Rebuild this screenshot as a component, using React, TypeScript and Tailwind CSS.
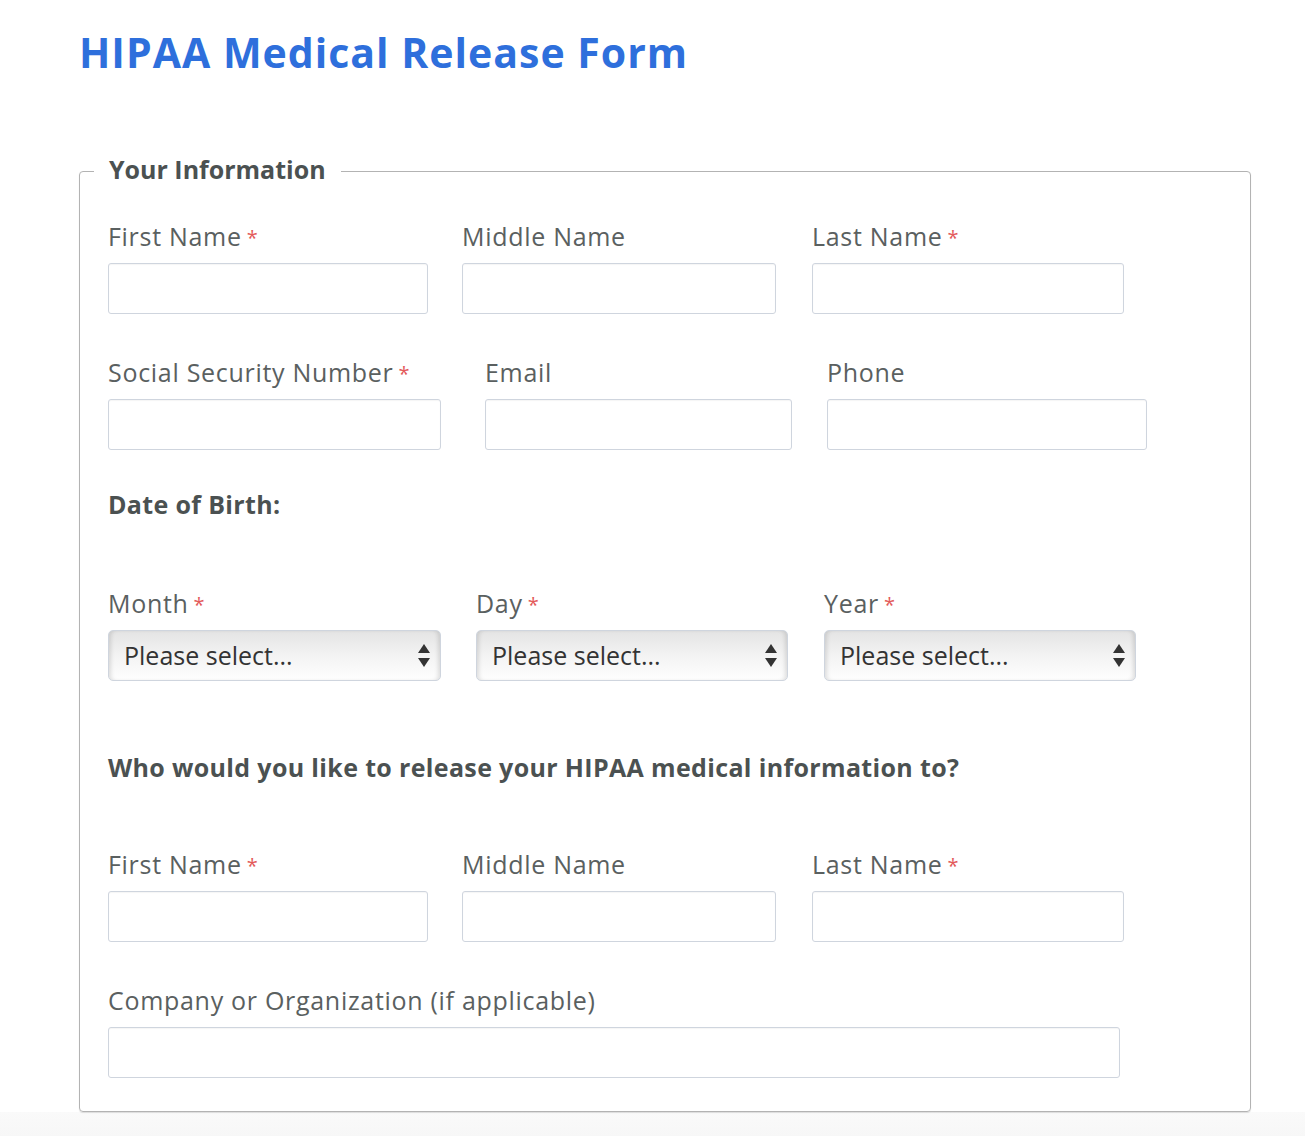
import React from "react";

const font = { fontFamily: '"Open Sans", "Liberation Sans", sans-serif' };

type Field = { label: string; required?: boolean; width: string };

function Label({ text, required }: { text: string; required?: boolean }) {
  return (
    <label className="block text-[25px] leading-[30px] tracking-[0.7px] text-[#5a6060] mb-[12px] whitespace-nowrap">
      {text}
      {required && <span className="text-[#e35a5a] text-[20px] align-top ml-[5px] relative top-[2px]">*</span>}
    </label>
  );
}

function TextField({ label, required, width }: Field) {
  return (
    <div className={width}>
      <Label text={label} required={required} />
      <input
        type="text"
        className="block w-full h-[51px] bg-white border border-[#cfd5de] rounded-[3px] shadow-[inset_0_1px_1px_rgba(0,0,0,0.04)] outline-none"
      />
    </div>
  );
}

function SelectField({ label, required, width }: Field) {
  return (
    <div className={width}>
      <Label text={label} required={required} />
      <div className="relative h-[51px]">
        <select
          className="appearance-none w-full h-full pl-[15px] pr-[40px] text-[25px] text-[#333] border border-[#cfd5de] rounded-[5px] bg-gradient-to-b from-[#e4e4e4] via-[#f3f3f3] to-[#fefefe] shadow-[inset_4px_0_4px_-2px_rgba(0,0,0,0.12),inset_-4px_0_4px_-2px_rgba(0,0,0,0.12)] outline-none"
          style={font}
          defaultValue=""
        >
          <option value="">Please select...</option>
        </select>
        <svg
          className="absolute right-[11px] top-[14px] pointer-events-none"
          width="12"
          height="24"
          viewBox="0 0 12 24"
        >
          <path d="M6 0 L12 9 L0 9 Z" fill="#333" />
          <path d="M0 14 L12 14 L6 23 Z" fill="#333" />
        </svg>
      </div>
    </div>
  );
}

function Heading({ children, className = "" }: { children: React.ReactNode; className?: string }) {
  return (
    <h3 className={`text-[25px] leading-[30px] font-bold tracking-[0.35px] text-[#4b5151] ${className}`}>
      {children}
    </h3>
  );
}

const nameRow: Field[] = [
  { label: "First Name", required: true, width: "w-[320px]" },
  { label: "Middle Name", width: "w-[314px] ml-[34px]" },
  { label: "Last Name", required: true, width: "w-[312px] ml-[36px]" },
];

export default function App() {
  return (
    <div className="min-h-[1136px] bg-white flex flex-col" style={font}>
      <h1 className="pl-[79px] pt-[28px] text-[41px] leading-[49px] font-bold tracking-[1px] text-[#2e6fdc]">
        HIPAA Medical Release Form
      </h1>

      <div className="relative ml-[79px] mt-[94px] w-[1172px] border-[1.5px] border-[#b3b3b3] rounded-[4px] shadow-[0_1px_1px_rgba(0,0,0,0.12)] pl-[28px] pt-[49px] pb-[33px]">
        <div className="absolute -top-[18px] left-[14px] px-[15px] bg-white">
          <h3 className="text-[25px] leading-[30px] font-bold text-[#4b5151]">Your Information</h3>
        </div>

        <div className="flex">
          {nameRow.map((f) => (
            <TextField key={f.label} {...f} />
          ))}
        </div>

        <div className="flex mt-[43px]">
          <TextField label="Social Security Number" required width="w-[333px]" />
          <TextField label="Email" width="w-[307px] ml-[44px]" />
          <TextField label="Phone" width="w-[320px] ml-[35px]" />
        </div>

        <Heading className="mt-[39px]">Date of Birth:</Heading>

        <div className="flex mt-[69px]">
          <SelectField label="Month" required width="w-[333px]" />
          <SelectField label="Day" required width="w-[312px] ml-[35px]" />
          <SelectField label="Year" required width="w-[312px] ml-[36px]" />
        </div>

        <Heading className="mt-[71px]">Who would you like to release your HIPAA medical information to?</Heading>

        <div className="flex mt-[67px]">
          {nameRow.map((f) => (
            <TextField key={f.label} {...f} />
          ))}
        </div>

        <div className="mt-[43px]">
          <TextField label="Company or Organization (if applicable)" width="w-[1012px]" />
        </div>
      </div>

      <div className="flex-1 mt-0 bg-gradient-to-b from-[#fafafa] to-[#f7f7f7]" />
    </div>
  );
}
